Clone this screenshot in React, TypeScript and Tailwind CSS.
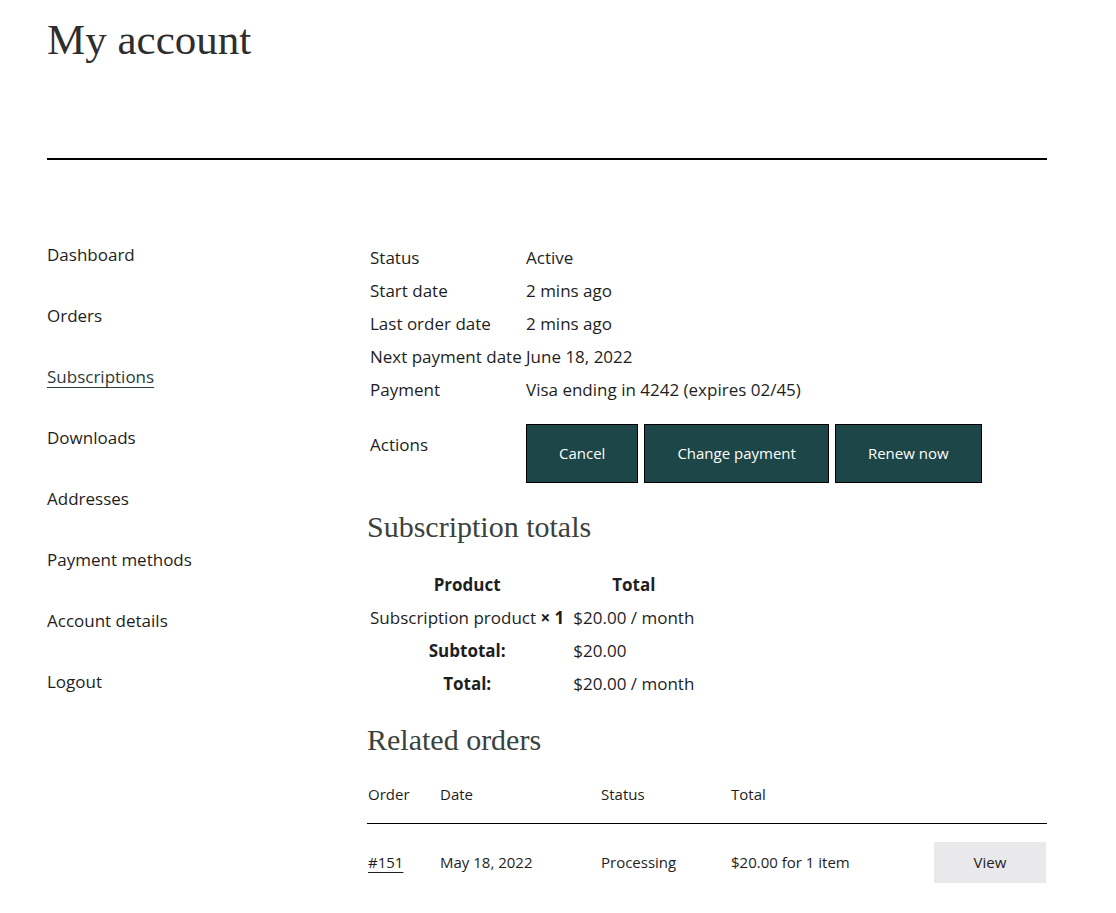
import React from 'react';

const sans = { fontFamily: '"Open Sans", "Noto Sans", sans-serif' };
const serif = { fontFamily: '"Liberation Serif", "DejaVu Serif", serif' };

const navItems = [
  'Dashboard',
  'Orders',
  'Subscriptions',
  'Downloads',
  'Addresses',
  'Payment methods',
  'Account details',
  'Logout',
];

const details: [string, string][] = [
  ['Status', 'Active'],
  ['Start date', '2 mins ago'],
  ['Last order date', '2 mins ago'],
  ['Next payment date', 'June 18, 2022'],
  ['Payment', 'Visa ending in 4242 (expires 02/45)'],
];

export default function App() {
  return (
    <div className="min-h-screen bg-white text-[#1e1e1e] px-[47px]" style={sans}>
      {/* Header */}
      <h1 className="pt-[12px] text-[43px] leading-[56px] font-normal text-[#2e2e2e]" style={serif}>
        My account
      </h1>
      <div className="mt-[90px] w-[1000px] border-t-2 border-black" />

      <div className="mt-[83px] flex">
        {/* Sidebar nav */}
        <nav className="w-[320px] shrink-0">
          <ul className="flex flex-col gap-[37px] text-[17px] leading-[24px]">
            {navItems.map((item) => (
              <li key={item}>
                <a
                  href="#"
                  className={
                    item === 'Subscriptions'
                      ? 'underline underline-offset-4 decoration-1 text-[#2c3a3a]'
                      : 'text-[#1e1e1e]'
                  }
                >
                  {item}
                </a>
              </li>
            ))}
          </ul>
        </nav>

        {/* Main content */}
        <main className="w-[680px]">
          <table className="-mt-[2px] text-[17px] leading-[33px]">
            <tbody>
              {details.map(([label, value]) => (
                <tr key={label}>
                  <td className="w-[159px] pl-[3px] align-top whitespace-nowrap">{label}</td>
                  <td className="whitespace-nowrap">{value}</td>
                </tr>
              ))}
              <tr>
                <td className="pl-[3px] pt-[18px] align-top leading-[24px]">
                  <div className="pt-[9px]">Actions</div>
                </td>
                <td className="pt-[18px]">
                  <div className="flex gap-[6px]">
                    {['Cancel', 'Change payment', 'Renew now'].map((b) => (
                      <a
                        key={b}
                        href="#"
                        className="h-[59px] flex items-center px-[32px] bg-[#1d4648] border border-black text-white text-[15px]"
                      >
                        {b}
                      </a>
                    ))}
                  </div>
                </td>
              </tr>
            </tbody>
          </table>

          <h2 className="mt-[24px] text-[30px] leading-[40px] text-[#3a423e]" style={serif}>
            Subscription totals
          </h2>

          <table className="mt-[21px] text-[17px] leading-[33px]">
            <thead>
              <tr>
                <th className="pl-[3px] font-bold text-center">Product</th>
                <th className="pl-[9px] pr-[6px] font-bold text-center">Total</th>
              </tr>
            </thead>
            <tbody>
              <tr>
                <td className="pl-[3px] text-center whitespace-nowrap">
                  Subscription product <strong className="font-bold">× 1</strong>
                </td>
                <td className="pl-[9px] pr-[6px] whitespace-nowrap">$20.00 / month</td>
              </tr>
              <tr>
                <th className="pl-[3px] text-center font-bold">Subtotal:</th>
                <td className="pl-[9px] pr-[6px]">$20.00</td>
              </tr>
              <tr>
                <th className="pl-[3px] text-center font-bold">Total:</th>
                <td className="pl-[9px] pr-[6px]">$20.00 / month</td>
              </tr>
            </tbody>
          </table>

          <h2 className="mt-[20px] text-[30px] leading-[40px] text-[#3a423e]" style={serif}>
            Related orders
          </h2>

          <div className="mt-[18px] w-[680px] text-[15px]">
            <div className="grid grid-cols-[73px_161px_130px_1fr_auto] items-center h-[46px] border-b border-black pb-[12px]">
              <div className="pl-[1px]">Order</div>
              <div>Date</div>
              <div>Status</div>
              <div>Total</div>
              <div />
            </div>
            <div className="grid grid-cols-[73px_161px_130px_1fr_auto] items-center pt-[18px]">
              <div className="pl-[1px]">
                <a href="#" className="underline underline-offset-4 decoration-1">
                  #151
                </a>
              </div>
              <div>May 18, 2022</div>
              <div>Processing</div>
              <div>$20.00 for 1 item</div>
              <a
                href="#"
                className="mr-[1px] w-[112px] h-[41px] flex items-center justify-center bg-[#e9e8ea] text-[#1e1e1e]"
              >
                View
              </a>
            </div>
          </div>
        </main>
      </div>
    </div>
  );
}
